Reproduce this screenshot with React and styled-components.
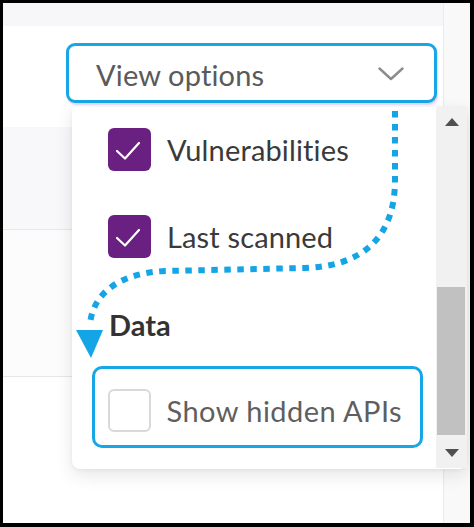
import React from 'react';
import styled, { createGlobalStyle } from 'styled-components';

const Global = createGlobalStyle`
  html, body { margin: 0; padding: 0; background: #fff; }
  body { font-family: Lato, "Noto Sans", sans-serif; }
  *, *::before, *::after { box-sizing: border-box; }
`;

const Frame = styled.div`
  position: relative;
  width: 474px;
  height: 527px;
  border-style: solid;
  border-color: #000;
  border-width: 3px 4px 4px 3px;
  display: flex;
  overflow: hidden;
  background: #fff;
`;

const Main = styled.div`
  flex: 1;
  min-width: 0;
  display: flex;
  flex-direction: column;
`;

const Gutter = styled.div`
  width: 27px;
  border-left: 1px solid #ebebee;
  background: #f9f9fa;
`;

const HeaderStrip = styled.div`
  height: 23px;
  background: #f7f7f9;
`;

const Toolbar = styled.div`
  height: 101px;
  display: flex;
  justify-content: flex-end;
  padding: 17px 6px 0 0;
  background: #fff;
`;

const Row = styled.div`
  height: ${p => p.$h}px;
  background: ${p => p.$bg};
  border-bottom: ${p => (p.$line ? '1px solid #e7e7ea' : 'none')};
`;

const ButtonWrap = styled.div`
  position: relative;
  width: 371px;
  height: 60px;
`;

const SelectButton = styled.div`
  width: 100%;
  height: 100%;
  display: flex;
  align-items: center;
  justify-content: space-between;
  padding: 2px 30px 0 27px;
  border: 3.5px solid #17a6e6;
  border-radius: 9px;
  background: #fff;
  box-shadow: 1px 2px 2px rgba(175, 130, 225, 0.35);
  font-size: 29px;
  letter-spacing: 0.15px;
  color: #5a5a5a;
`;

const Menu = styled.div`
  position: absolute;
  top: calc(100% + 4px);
  left: 6px;
  width: 395px;
  height: 362px;
  display: flex;
  background: #fff;
  border-radius: 0 0 8px 8px;
  box-shadow: 0 6px 18px rgba(0, 0, 0, 0.1), 0 1px 4px rgba(0, 0, 0, 0.05);
`;

const MenuList = styled.div`
  flex: 1;
  display: flex;
  flex-direction: column;
  padding-top: 21px;
`;

const Option = styled.div`
  display: flex;
  align-items: center;
  gap: 16px;
  height: 43px;
  padding-left: 36px;
  margin-bottom: ${p => p.$mb || 0}px;
  font-size: 29px;
  letter-spacing: 0.15px;
  color: #3a3a3a;
`;

const Box = styled.div`
  width: 43px;
  height: 43px;
  flex: none;
  border-radius: 6px;
  display: flex;
  align-items: center;
  justify-content: center;
  background: ${p => (p.$checked ? '#6a2080' : '#fff')};
  border: ${p => (p.$checked ? 'none' : '2.5px solid #d9d9d9')};
`;

const Heading = styled.div`
  margin: 0 0 24px 37px;
  font-size: 29px;
  font-weight: 700;
  color: #333;
  line-height: 34px;
  height: 34px;
`;

const Highlight = styled.div`
  margin: 0 0 0 20px;
  width: 331px;
  height: 82px;
  border: 3.5px solid #17a6e6;
  border-radius: 10px;
  display: flex;
  align-items: flex-start;
  gap: 16px;
  padding: 19.5px 13px 0 12.5px;
  font-size: 29px;
  letter-spacing: 0.45px;
  color: #5f5f5f;
`;

const Label = styled.span`
  line-height: 43px;
  white-space: nowrap;
`;

const Scrollbar = styled.div`
  width: 31px;
  display: flex;
  flex-direction: column;
  background: #f1f1f1;
  margin-bottom: 1px;
`;

const ScrollArrow = styled.div`
  height: 30px;
  display: flex;
  align-items: center;
  justify-content: center;
`;

const Track = styled.div`
  flex: 1;
  display: flex;
  flex-direction: column;
  padding: 150px 2px 3px 1px;
`;

const Thumb = styled.div`
  flex: 1;
  background: #c1c1c1;
`;

const Overlay = styled.svg`
  position: absolute;
  top: -3px;
  left: -3px;
  pointer-events: none;
`;

const Check = () => (
  <svg width="43" height="43" viewBox="0 0 43 43">
    <path d="M9 23 L17 30.5 L31 15" fill="none" stroke="#fff" strokeWidth="2.2" strokeLinecap="round" strokeLinejoin="round" />
  </svg>
);

const Chevron = () => (
  <svg width="26" height="14" viewBox="0 0 26 14">
    <path d="M1.5 1.5 L13 12 L24.5 1.5" fill="none" stroke="#8c8c8c" strokeWidth="2.4" strokeLinecap="round" strokeLinejoin="round" />
  </svg>
);

const Tri = ({ down }) => (
  <svg width="14" height="8" viewBox="0 0 14 8">
    <path d={down ? 'M0 0 L14 0 L7 8 Z' : 'M0 8 L14 8 L7 0 Z'} fill="#505050" />
  </svg>
);

export default function App() {
  return (
    <>
      <Global />
      <Frame>
        <Main>
          <HeaderStrip />
          <Toolbar>
            <ButtonWrap>
              <SelectButton>
                <span>View options</span>
                <Chevron />
              </SelectButton>
              <Menu>
                <MenuList>
                  <Option $mb={44}>
                    <Box $checked><Check /></Box>
                    <Label>Vulnerabilities</Label>
                  </Option>
                  <Option $mb={50}>
                    <Box $checked><Check /></Box>
                    <Label>Last scanned</Label>
                  </Option>
                  <Heading>Data</Heading>
                  <Highlight>
                    <Box />
                    <Label>Show hidden APIs</Label>
                  </Highlight>
                </MenuList>
                <Scrollbar>
                  <ScrollArrow><Tri /></ScrollArrow>
                  <Track><Thumb /></Track>
                  <ScrollArrow><Tri down /></ScrollArrow>
                </Scrollbar>
              </Menu>
            </ButtonWrap>
          </Toolbar>
          <Row $h={103} $bg="#f8f8fa" $line />
          <Row $h={147} $bg="#fcfcfd" $line />
          <Row $h={143} $bg="#fff" />
        </Main>
        <Gutter />
        <Overlay width="474" height="527" viewBox="0 0 474 527">
          <path
            d="M395 111 L395 180 C395 238 362 266 305 268 L165 271 C120 273 93 293 90 324"
            fill="none"
            stroke="#14a5e6"
            strokeWidth="6"
            strokeDasharray="6.5 6.5"
          />
          <path d="M76 330 L103 330 L91 358 Z" fill="#14a5e6" />
        </Overlay>
      </Frame>
    </>
  );
}
